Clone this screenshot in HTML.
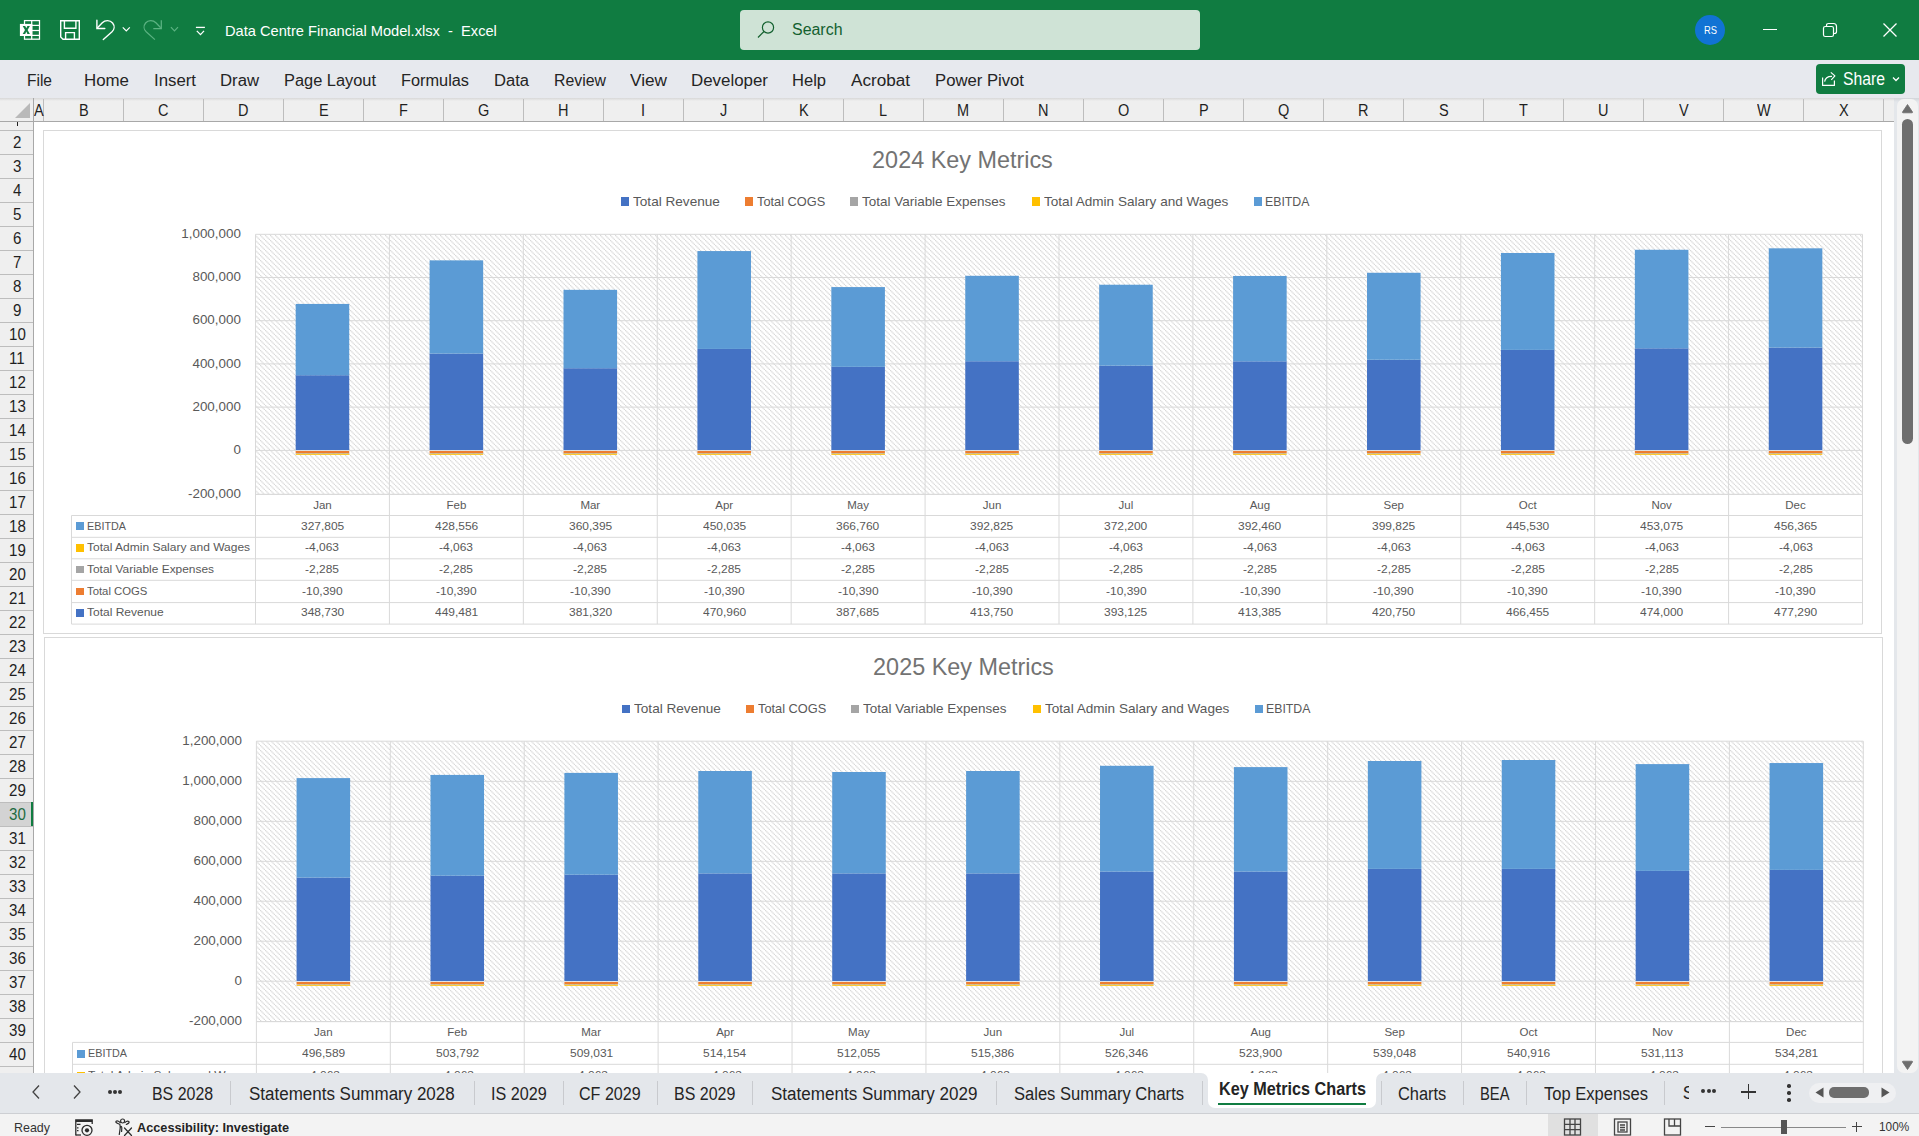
<!DOCTYPE html><html><head><meta charset="utf-8"><style>
*{margin:0;padding:0;box-sizing:border-box}
html,body{width:1919px;height:1136px;overflow:hidden;background:#fff;font-family:"Liberation Sans", sans-serif}
.a{position:absolute}
.t{position:absolute;white-space:nowrap;line-height:1}
</style></head><body>

<div class="a" style="left:0;top:0;width:1919px;height:60px;background:#107C41"></div>
<svg class="a" style="left:14px;top:14px" width="32" height="32" viewBox="14 14 32 32">
<g fill="none" stroke="#fff" stroke-width="1.25">
<rect x="24.5" y="20.6" width="15" height="18.6"/>
<line x1="31.7" y1="20.6" x2="31.7" y2="39.2"/>
<line x1="31.7" y1="25.4" x2="39.5" y2="25.4"/><line x1="31.7" y1="30.5" x2="39.5" y2="30.5"/><line x1="31.7" y1="35.4" x2="39.5" y2="35.4"/>
</g>
<rect x="19.9" y="23.9" width="12.4" height="12.1" fill="#fff"/>
<path d="M22.7 26 H25.2 L26.3 28.3 L27.4 26 H29.9 L27.6 29.9 L29.9 33.9 H27.4 L26.3 31.6 L25.2 33.9 H22.7 L25 29.9 Z" fill="#107C41"/>
</svg>
<svg class="a" style="left:58px;top:18px" width="24" height="24" viewBox="0 0 24 24">
<g fill="none" stroke="#fff" stroke-width="1.4">
<path d="M2.7 2.7 H21.3 V21.3 H5 L2.7 19 Z"/>
<path d="M6.4 2.7 V10.2 H17.9 V2.7"/>
<path d="M7.6 21.3 V14.6 H16.4 V21.3"/>
</g></svg>
<svg class="a" style="left:94px;top:18px" width="24" height="24" viewBox="0 0 24 24">
<g fill="none" stroke="#fff" stroke-width="1.4" stroke-linecap="round">
<path d="M2.9 2.3 V10.5 H10.8"/>
<path d="M3.5 9.8 L8.3 4.8 C11 2 16 1.8 18.6 5 C21 8 20.3 11.6 18 13.8 L9.3 21.6"/>
</g></svg>
<svg class="a" style="left:120px;top:25px" width="12" height="10" viewBox="0 0 12 10"><path d="M2.75 2.3 L6.3 5.9 L9.8 2.3" fill="none" stroke="#fff" stroke-width="1.2"/></svg>
<svg class="a" style="left:142px;top:18px" width="24" height="24" viewBox="0 0 24 24">
<g fill="none" stroke="#5BB282" stroke-width="1.25" stroke-linecap="butt">
<path d="M19.3 2.3 V10.6 H11.3"/>
<path d="M18.7 9.8 L13.9 4.8 C11.2 2 6.2 1.8 3.6 5 C1.2 8 1.9 11.6 4.2 13.8 L12.9 21.6"/>
</g></svg>
<svg class="a" style="left:168px;top:25px" width="12" height="10" viewBox="0 0 12 10"><path d="M2.9 2.2 L6.45 5.9 L10 2.2" fill="none" stroke="#5BB282" stroke-width="1.2"/></svg>
<svg class="a" style="left:193px;top:24px" width="14" height="14" viewBox="0 0 14 14"><g fill="none" stroke="#fff" stroke-width="1.3"><path d="M2.9 3.4 H11.9"/><path d="M3.8 6.9 L7.5 10.6 L11 6.9"/></g></svg>
<div class="t" style="left:225.00px;top:23.54px;font-size:14.6px;color:#fff;transform:scaleX(1.0036);transform-origin:0 0">Data Centre Financial Model.xlsx&nbsp; - &nbsp;Excel</div>
<div class="a" style="left:740px;top:10px;width:460px;height:40px;background:#CFE3D6;border-radius:4px"></div>
<svg class="a" style="left:754px;top:18px" width="24" height="24" viewBox="0 0 24 24"><g fill="none" stroke="#13602F" stroke-width="1.2"><circle cx="14" cy="9.5" r="5.6"/><path d="M10 13.5 L4 19.5"/></g></svg>
<div class="t" style="left:792.00px;top:22.26px;font-size:16px;color:#13602F;transform:scaleX(0.9961);transform-origin:0 0">Search</div>
<div class="a" style="left:1695px;top:15px;width:30px;height:30px;border-radius:50%;background:#1173D4"></div>
<div class="t" style="left:1703.50px;top:24.57px;font-size:11.5px;color:#fff;transform:scaleX(0.8137);transform-origin:0 0">RS</div>
<div class="a" style="left:1763px;top:29px;width:14px;height:1.3px;background:#fff"></div>
<svg class="a" style="left:1820px;top:20px" width="20" height="20" viewBox="0 0 20 20"><g fill="none" stroke="#fff" stroke-width="1.2"><path d="M6.5 6.5 V5.5 Q6.5 3.5 8.5 3.5 H13.5 Q16.5 3.5 16.5 6.5 V11.5 Q16.5 13.5 14.5 13.5 H13.5"/><rect x="3.5" y="6.5" width="10" height="10" rx="1.8" fill="#107C41"/></g></svg>
<svg class="a" style="left:1880px;top:20px" width="20" height="20" viewBox="0 0 20 20"><g stroke="#fff" stroke-width="1.3"><path d="M3.5 3.5 L16.5 16.5 M16.5 3.5 L3.5 16.5"/></g></svg>
<div class="a" style="left:0;top:60px;width:1919px;height:38px;background:#E7E9EE"></div>
<div class="t" style="left:27.00px;top:72.76px;font-size:16px;color:#242424;transform:scaleX(0.9696);transform-origin:0 0">File</div>
<div class="t" style="left:84.00px;top:72.76px;font-size:16px;color:#242424;transform:scaleX(1.0543);transform-origin:0 0">Home</div>
<div class="t" style="left:154.00px;top:72.76px;font-size:16px;color:#242424;transform:scaleX(1.0496);transform-origin:0 0">Insert</div>
<div class="t" style="left:220.00px;top:72.76px;font-size:16px;color:#242424;transform:scaleX(1.0445);transform-origin:0 0">Draw</div>
<div class="t" style="left:284.00px;top:72.76px;font-size:16px;color:#242424;transform:scaleX(1.0239);transform-origin:0 0">Page Layout</div>
<div class="t" style="left:401.00px;top:72.76px;font-size:16px;color:#242424;transform:scaleX(1.0198);transform-origin:0 0">Formulas</div>
<div class="t" style="left:494.00px;top:72.76px;font-size:16px;color:#242424;transform:scaleX(1.0356);transform-origin:0 0">Data</div>
<div class="t" style="left:554.00px;top:72.76px;font-size:16px;color:#242424;transform:scaleX(0.9912);transform-origin:0 0">Review</div>
<div class="t" style="left:630.00px;top:72.76px;font-size:16px;color:#242424;transform:scaleX(1.0758);transform-origin:0 0">View</div>
<div class="t" style="left:691.00px;top:72.76px;font-size:16px;color:#242424;transform:scaleX(1.0558);transform-origin:0 0">Developer</div>
<div class="t" style="left:792.00px;top:72.76px;font-size:16px;color:#242424;transform:scaleX(1.0332);transform-origin:0 0">Help</div>
<div class="t" style="left:851.00px;top:72.76px;font-size:16px;color:#242424;transform:scaleX(1.0700);transform-origin:0 0">Acrobat</div>
<div class="t" style="left:935.00px;top:72.76px;font-size:16px;color:#242424;transform:scaleX(1.0425);transform-origin:0 0">Power Pivot</div>
<div class="a" style="left:1816px;top:64px;width:89px;height:30px;background:#107C41;border-radius:4px"></div>
<svg class="a" style="left:1821px;top:70px" width="18" height="18" viewBox="0 0 18 18"><g fill="none" stroke="#fff" stroke-width="1.2" stroke-linejoin="round"><path d="M1.6 7.5 V15.4 H13.4 V10.5"/><path d="M3.6 11.6 C4.2 8 7 6.3 11 6.4"/><path d="M9.8 2.4 L13.9 5.9 L10.3 9.8"/></g></svg>
<div class="t" style="left:1843.00px;top:71.39px;font-size:17.5px;color:#fff;transform:scaleX(0.8994);transform-origin:0 0">Share</div>
<svg class="a" style="left:1891px;top:74px" width="10" height="10" viewBox="0 0 10 10"><path d="M2 3.5 L5 6.5 L8 3.5" fill="none" stroke="#fff" stroke-width="1.3"/></svg>
<div class="a" style="left:0;top:98px;width:1894px;height:24px;background:#EFEFEF"></div>
<div class="a" style="left:0;top:98px;width:1894px;height:3px;background:linear-gradient(#D8D8D8,#EFEFEF)"></div>
<div class="a" style="left:0;top:121px;width:1894px;height:1px;background:#A8A8A8"></div>
<svg class="a" style="left:14px;top:102px" width="18" height="18"><path d="M16 1 V16 H1 Z" fill="#B9B9B9"/></svg>
<div class="a" style="left:33px;top:98px;width:1px;height:1000px;background:#A8A8A8"></div>
<div class="a" style="left:43px;top:99px;width:1px;height:22px;background:#BDBDBD"></div>
<div class="t" style="left:33.66px;top:102.03px;font-size:16.5px;color:#1F1F1F;transform:scaleX(0.8800);transform-origin:0 0">A</div>
<div class="a" style="left:123px;top:99px;width:1px;height:22px;background:#BDBDBD"></div>
<div class="t" style="left:78.66px;top:102.03px;font-size:16.5px;color:#1F1F1F;transform:scaleX(0.8800);transform-origin:0 0">B</div>
<div class="a" style="left:203px;top:99px;width:1px;height:22px;background:#BDBDBD"></div>
<div class="t" style="left:158.26px;top:102.03px;font-size:16.5px;color:#1F1F1F;transform:scaleX(0.8800);transform-origin:0 0">C</div>
<div class="a" style="left:283px;top:99px;width:1px;height:22px;background:#BDBDBD"></div>
<div class="t" style="left:238.26px;top:102.03px;font-size:16.5px;color:#1F1F1F;transform:scaleX(0.8800);transform-origin:0 0">D</div>
<div class="a" style="left:363px;top:99px;width:1px;height:22px;background:#BDBDBD"></div>
<div class="t" style="left:318.66px;top:102.03px;font-size:16.5px;color:#1F1F1F;transform:scaleX(0.8800);transform-origin:0 0">E</div>
<div class="a" style="left:443px;top:99px;width:1px;height:22px;background:#BDBDBD"></div>
<div class="t" style="left:399.07px;top:102.03px;font-size:16.5px;color:#1F1F1F;transform:scaleX(0.8800);transform-origin:0 0">F</div>
<div class="a" style="left:523px;top:99px;width:1px;height:22px;background:#BDBDBD"></div>
<div class="t" style="left:477.85px;top:102.03px;font-size:16.5px;color:#1F1F1F;transform:scaleX(0.8800);transform-origin:0 0">G</div>
<div class="a" style="left:603px;top:99px;width:1px;height:22px;background:#BDBDBD"></div>
<div class="t" style="left:558.26px;top:102.03px;font-size:16.5px;color:#1F1F1F;transform:scaleX(0.8800);transform-origin:0 0">H</div>
<div class="a" style="left:683px;top:99px;width:1px;height:22px;background:#BDBDBD"></div>
<div class="t" style="left:641.48px;top:102.03px;font-size:16.5px;color:#1F1F1F;transform:scaleX(0.8800);transform-origin:0 0">I</div>
<div class="a" style="left:763px;top:99px;width:1px;height:22px;background:#BDBDBD"></div>
<div class="t" style="left:719.87px;top:102.03px;font-size:16.5px;color:#1F1F1F;transform:scaleX(0.8800);transform-origin:0 0">J</div>
<div class="a" style="left:843px;top:99px;width:1px;height:22px;background:#BDBDBD"></div>
<div class="t" style="left:798.66px;top:102.03px;font-size:16.5px;color:#1F1F1F;transform:scaleX(0.8800);transform-origin:0 0">K</div>
<div class="a" style="left:923px;top:99px;width:1px;height:22px;background:#BDBDBD"></div>
<div class="t" style="left:879.46px;top:102.03px;font-size:16.5px;color:#1F1F1F;transform:scaleX(0.8800);transform-origin:0 0">L</div>
<div class="a" style="left:1003px;top:99px;width:1px;height:22px;background:#BDBDBD"></div>
<div class="t" style="left:957.45px;top:102.03px;font-size:16.5px;color:#1F1F1F;transform:scaleX(0.8800);transform-origin:0 0">M</div>
<div class="a" style="left:1083px;top:99px;width:1px;height:22px;background:#BDBDBD"></div>
<div class="t" style="left:1038.26px;top:102.03px;font-size:16.5px;color:#1F1F1F;transform:scaleX(0.8800);transform-origin:0 0">N</div>
<div class="a" style="left:1163px;top:99px;width:1px;height:22px;background:#BDBDBD"></div>
<div class="t" style="left:1117.85px;top:102.03px;font-size:16.5px;color:#1F1F1F;transform:scaleX(0.8800);transform-origin:0 0">O</div>
<div class="a" style="left:1243px;top:99px;width:1px;height:22px;background:#BDBDBD"></div>
<div class="t" style="left:1198.66px;top:102.03px;font-size:16.5px;color:#1F1F1F;transform:scaleX(0.8800);transform-origin:0 0">P</div>
<div class="a" style="left:1323px;top:99px;width:1px;height:22px;background:#BDBDBD"></div>
<div class="t" style="left:1277.85px;top:102.03px;font-size:16.5px;color:#1F1F1F;transform:scaleX(0.8800);transform-origin:0 0">Q</div>
<div class="a" style="left:1403px;top:99px;width:1px;height:22px;background:#BDBDBD"></div>
<div class="t" style="left:1358.26px;top:102.03px;font-size:16.5px;color:#1F1F1F;transform:scaleX(0.8800);transform-origin:0 0">R</div>
<div class="a" style="left:1483px;top:99px;width:1px;height:22px;background:#BDBDBD"></div>
<div class="t" style="left:1438.66px;top:102.03px;font-size:16.5px;color:#1F1F1F;transform:scaleX(0.8800);transform-origin:0 0">S</div>
<div class="a" style="left:1563px;top:99px;width:1px;height:22px;background:#BDBDBD"></div>
<div class="t" style="left:1519.07px;top:102.03px;font-size:16.5px;color:#1F1F1F;transform:scaleX(0.8800);transform-origin:0 0">T</div>
<div class="a" style="left:1643px;top:99px;width:1px;height:22px;background:#BDBDBD"></div>
<div class="t" style="left:1598.26px;top:102.03px;font-size:16.5px;color:#1F1F1F;transform:scaleX(0.8800);transform-origin:0 0">U</div>
<div class="a" style="left:1723px;top:99px;width:1px;height:22px;background:#BDBDBD"></div>
<div class="t" style="left:1678.66px;top:102.03px;font-size:16.5px;color:#1F1F1F;transform:scaleX(0.8800);transform-origin:0 0">V</div>
<div class="a" style="left:1803px;top:99px;width:1px;height:22px;background:#BDBDBD"></div>
<div class="t" style="left:1756.65px;top:102.03px;font-size:16.5px;color:#1F1F1F;transform:scaleX(0.8800);transform-origin:0 0">W</div>
<div class="a" style="left:1883px;top:99px;width:1px;height:22px;background:#BDBDBD"></div>
<div class="t" style="left:1838.66px;top:102.03px;font-size:16.5px;color:#1F1F1F;transform:scaleX(0.8800);transform-origin:0 0">X</div>
<div class="a" style="left:0;top:122px;width:33px;height:951px;background:#EFEFEF"></div>
<div class="a" style="left:0;top:130px;width:33px;height:1px;background:#BDBDBD"></div>
<div class="a" style="left:16.5px;top:122px;width:1.5px;height:3.5px;background:#1F1F1F"></div>
<div class="a" style="left:0;top:154px;width:33px;height:1px;background:#BDBDBD"></div>
<div class="t" style="left:12.80px;top:135.18px;font-size:16.8px;color:#1F1F1F;transform:scaleX(0.9000);transform-origin:0 0">2</div>
<div class="a" style="left:0;top:178px;width:33px;height:1px;background:#BDBDBD"></div>
<div class="t" style="left:12.80px;top:159.18px;font-size:16.8px;color:#1F1F1F;transform:scaleX(0.9000);transform-origin:0 0">3</div>
<div class="a" style="left:0;top:202px;width:33px;height:1px;background:#BDBDBD"></div>
<div class="t" style="left:12.80px;top:183.18px;font-size:16.8px;color:#1F1F1F;transform:scaleX(0.9000);transform-origin:0 0">4</div>
<div class="a" style="left:0;top:226px;width:33px;height:1px;background:#BDBDBD"></div>
<div class="t" style="left:12.80px;top:207.18px;font-size:16.8px;color:#1F1F1F;transform:scaleX(0.9000);transform-origin:0 0">5</div>
<div class="a" style="left:0;top:250px;width:33px;height:1px;background:#BDBDBD"></div>
<div class="t" style="left:12.80px;top:231.18px;font-size:16.8px;color:#1F1F1F;transform:scaleX(0.9000);transform-origin:0 0">6</div>
<div class="a" style="left:0;top:274px;width:33px;height:1px;background:#BDBDBD"></div>
<div class="t" style="left:12.80px;top:255.18px;font-size:16.8px;color:#1F1F1F;transform:scaleX(0.9000);transform-origin:0 0">7</div>
<div class="a" style="left:0;top:298px;width:33px;height:1px;background:#BDBDBD"></div>
<div class="t" style="left:12.80px;top:279.18px;font-size:16.8px;color:#1F1F1F;transform:scaleX(0.9000);transform-origin:0 0">8</div>
<div class="a" style="left:0;top:322px;width:33px;height:1px;background:#BDBDBD"></div>
<div class="t" style="left:12.80px;top:303.18px;font-size:16.8px;color:#1F1F1F;transform:scaleX(0.9000);transform-origin:0 0">9</div>
<div class="a" style="left:0;top:346px;width:33px;height:1px;background:#BDBDBD"></div>
<div class="t" style="left:8.59px;top:327.18px;font-size:16.8px;color:#1F1F1F;transform:scaleX(0.9000);transform-origin:0 0">10</div>
<div class="a" style="left:0;top:370px;width:33px;height:1px;background:#BDBDBD"></div>
<div class="t" style="left:9.15px;top:351.18px;font-size:16.8px;color:#1F1F1F;transform:scaleX(0.9000);transform-origin:0 0">11</div>
<div class="a" style="left:0;top:394px;width:33px;height:1px;background:#BDBDBD"></div>
<div class="t" style="left:8.59px;top:375.18px;font-size:16.8px;color:#1F1F1F;transform:scaleX(0.9000);transform-origin:0 0">12</div>
<div class="a" style="left:0;top:418px;width:33px;height:1px;background:#BDBDBD"></div>
<div class="t" style="left:8.59px;top:399.18px;font-size:16.8px;color:#1F1F1F;transform:scaleX(0.9000);transform-origin:0 0">13</div>
<div class="a" style="left:0;top:442px;width:33px;height:1px;background:#BDBDBD"></div>
<div class="t" style="left:8.59px;top:423.18px;font-size:16.8px;color:#1F1F1F;transform:scaleX(0.9000);transform-origin:0 0">14</div>
<div class="a" style="left:0;top:466px;width:33px;height:1px;background:#BDBDBD"></div>
<div class="t" style="left:8.59px;top:447.18px;font-size:16.8px;color:#1F1F1F;transform:scaleX(0.9000);transform-origin:0 0">15</div>
<div class="a" style="left:0;top:490px;width:33px;height:1px;background:#BDBDBD"></div>
<div class="t" style="left:8.59px;top:471.18px;font-size:16.8px;color:#1F1F1F;transform:scaleX(0.9000);transform-origin:0 0">16</div>
<div class="a" style="left:0;top:514px;width:33px;height:1px;background:#BDBDBD"></div>
<div class="t" style="left:8.59px;top:495.18px;font-size:16.8px;color:#1F1F1F;transform:scaleX(0.9000);transform-origin:0 0">17</div>
<div class="a" style="left:0;top:538px;width:33px;height:1px;background:#BDBDBD"></div>
<div class="t" style="left:8.59px;top:519.18px;font-size:16.8px;color:#1F1F1F;transform:scaleX(0.9000);transform-origin:0 0">18</div>
<div class="a" style="left:0;top:562px;width:33px;height:1px;background:#BDBDBD"></div>
<div class="t" style="left:8.59px;top:543.18px;font-size:16.8px;color:#1F1F1F;transform:scaleX(0.9000);transform-origin:0 0">19</div>
<div class="a" style="left:0;top:586px;width:33px;height:1px;background:#BDBDBD"></div>
<div class="t" style="left:8.59px;top:567.18px;font-size:16.8px;color:#1F1F1F;transform:scaleX(0.9000);transform-origin:0 0">20</div>
<div class="a" style="left:0;top:610px;width:33px;height:1px;background:#BDBDBD"></div>
<div class="t" style="left:8.59px;top:591.18px;font-size:16.8px;color:#1F1F1F;transform:scaleX(0.9000);transform-origin:0 0">21</div>
<div class="a" style="left:0;top:634px;width:33px;height:1px;background:#BDBDBD"></div>
<div class="t" style="left:8.59px;top:615.18px;font-size:16.8px;color:#1F1F1F;transform:scaleX(0.9000);transform-origin:0 0">22</div>
<div class="a" style="left:0;top:658px;width:33px;height:1px;background:#BDBDBD"></div>
<div class="t" style="left:8.59px;top:639.18px;font-size:16.8px;color:#1F1F1F;transform:scaleX(0.9000);transform-origin:0 0">23</div>
<div class="a" style="left:0;top:682px;width:33px;height:1px;background:#BDBDBD"></div>
<div class="t" style="left:8.59px;top:663.18px;font-size:16.8px;color:#1F1F1F;transform:scaleX(0.9000);transform-origin:0 0">24</div>
<div class="a" style="left:0;top:706px;width:33px;height:1px;background:#BDBDBD"></div>
<div class="t" style="left:8.59px;top:687.18px;font-size:16.8px;color:#1F1F1F;transform:scaleX(0.9000);transform-origin:0 0">25</div>
<div class="a" style="left:0;top:730px;width:33px;height:1px;background:#BDBDBD"></div>
<div class="t" style="left:8.59px;top:711.18px;font-size:16.8px;color:#1F1F1F;transform:scaleX(0.9000);transform-origin:0 0">26</div>
<div class="a" style="left:0;top:754px;width:33px;height:1px;background:#BDBDBD"></div>
<div class="t" style="left:8.59px;top:735.18px;font-size:16.8px;color:#1F1F1F;transform:scaleX(0.9000);transform-origin:0 0">27</div>
<div class="a" style="left:0;top:778px;width:33px;height:1px;background:#BDBDBD"></div>
<div class="t" style="left:8.59px;top:759.18px;font-size:16.8px;color:#1F1F1F;transform:scaleX(0.9000);transform-origin:0 0">28</div>
<div class="a" style="left:0;top:802px;width:33px;height:1px;background:#BDBDBD"></div>
<div class="t" style="left:8.59px;top:783.18px;font-size:16.8px;color:#1F1F1F;transform:scaleX(0.9000);transform-origin:0 0">29</div>
<div class="a" style="left:0;top:826px;width:33px;height:1px;background:#BDBDBD"></div>
<div class="a" style="left:0;top:803px;width:33px;height:23px;background:#D3D3D3"></div>
<div class="a" style="left:31px;top:802px;width:2px;height:24px;background:#107C41"></div>
<div class="t" style="left:8.59px;top:807.18px;font-size:16.8px;color:#1E6B41;transform:scaleX(0.9000);transform-origin:0 0">30</div>
<div class="a" style="left:0;top:850px;width:33px;height:1px;background:#BDBDBD"></div>
<div class="t" style="left:8.59px;top:831.18px;font-size:16.8px;color:#1F1F1F;transform:scaleX(0.9000);transform-origin:0 0">31</div>
<div class="a" style="left:0;top:874px;width:33px;height:1px;background:#BDBDBD"></div>
<div class="t" style="left:8.59px;top:855.18px;font-size:16.8px;color:#1F1F1F;transform:scaleX(0.9000);transform-origin:0 0">32</div>
<div class="a" style="left:0;top:898px;width:33px;height:1px;background:#BDBDBD"></div>
<div class="t" style="left:8.59px;top:879.18px;font-size:16.8px;color:#1F1F1F;transform:scaleX(0.9000);transform-origin:0 0">33</div>
<div class="a" style="left:0;top:922px;width:33px;height:1px;background:#BDBDBD"></div>
<div class="t" style="left:8.59px;top:903.18px;font-size:16.8px;color:#1F1F1F;transform:scaleX(0.9000);transform-origin:0 0">34</div>
<div class="a" style="left:0;top:946px;width:33px;height:1px;background:#BDBDBD"></div>
<div class="t" style="left:8.59px;top:927.18px;font-size:16.8px;color:#1F1F1F;transform:scaleX(0.9000);transform-origin:0 0">35</div>
<div class="a" style="left:0;top:970px;width:33px;height:1px;background:#BDBDBD"></div>
<div class="t" style="left:8.59px;top:951.18px;font-size:16.8px;color:#1F1F1F;transform:scaleX(0.9000);transform-origin:0 0">36</div>
<div class="a" style="left:0;top:994px;width:33px;height:1px;background:#BDBDBD"></div>
<div class="t" style="left:8.59px;top:975.18px;font-size:16.8px;color:#1F1F1F;transform:scaleX(0.9000);transform-origin:0 0">37</div>
<div class="a" style="left:0;top:1018px;width:33px;height:1px;background:#BDBDBD"></div>
<div class="t" style="left:8.59px;top:999.18px;font-size:16.8px;color:#1F1F1F;transform:scaleX(0.9000);transform-origin:0 0">38</div>
<div class="a" style="left:0;top:1042px;width:33px;height:1px;background:#BDBDBD"></div>
<div class="t" style="left:8.59px;top:1023.18px;font-size:16.8px;color:#1F1F1F;transform:scaleX(0.9000);transform-origin:0 0">39</div>
<div class="a" style="left:0;top:1066px;width:33px;height:1px;background:#BDBDBD"></div>
<div class="t" style="left:8.59px;top:1047.18px;font-size:16.8px;color:#1F1F1F;transform:scaleX(0.9000);transform-origin:0 0">40</div>
<div class="a" style="left:0;top:1090px;width:33px;height:1px;background:#BDBDBD"></div>
<div class="a" style="left:34px;top:121px;width:1860px;height:952px;overflow:hidden">
<svg width="1860" height="952" style="position:absolute;left:0;top:0"><defs><pattern id="hp" patternUnits="userSpaceOnUse" x="0" y="0" width="5" height="5"><rect x="0" y="0" width="1" height="1" fill="rgb(217,217,217)"/><rect x="1" y="0" width="1" height="1" fill="rgb(246,246,246)"/><rect x="0" y="1" width="1" height="1" fill="rgb(246,246,246)"/><rect x="1" y="1" width="1" height="1" fill="rgb(231,231,231)"/><rect x="2" y="1" width="1" height="1" fill="rgb(241,241,241)"/><rect x="1" y="2" width="1" height="1" fill="rgb(241,241,241)"/><rect x="2" y="2" width="1" height="1" fill="rgb(236,236,236)"/><rect x="3" y="2" width="1" height="1" fill="rgb(241,241,241)"/><rect x="2" y="3" width="1" height="1" fill="rgb(241,241,241)"/><rect x="3" y="3" width="1" height="1" fill="rgb(231,231,231)"/><rect x="4" y="3" width="1" height="1" fill="rgb(246,246,246)"/><rect x="3" y="4" width="1" height="1" fill="rgb(246,246,246)"/><rect x="4" y="4" width="1" height="1" fill="rgb(217,217,217)"/></pattern></defs>
<g transform="translate(-34,-121)">
<rect x="43.5" y="130.5" width="1838.0" height="503.0" fill="#fff" stroke="#D9D9D9" stroke-width="1"/>
<rect x="255.5" y="234.3" width="1607.0" height="260.09999999999997" fill="url(#hp)"/>
<line x1="255.5" y1="234.3" x2="1862.5" y2="234.3" stroke="#D9D9D9" stroke-width="1"/>
<line x1="255.5" y1="277.5" x2="1862.5" y2="277.5" stroke="#D9D9D9" stroke-width="1"/>
<line x1="255.5" y1="320.7" x2="1862.5" y2="320.7" stroke="#D9D9D9" stroke-width="1"/>
<line x1="255.5" y1="363.9" x2="1862.5" y2="363.9" stroke="#D9D9D9" stroke-width="1"/>
<line x1="255.5" y1="407.1" x2="1862.5" y2="407.1" stroke="#D9D9D9" stroke-width="1"/>
<line x1="255.5" y1="450.4" x2="1862.5" y2="450.4" stroke="#D9D9D9" stroke-width="1"/>
<line x1="255.5" y1="494.4" x2="1862.5" y2="494.4" stroke="#D9D9D9" stroke-width="1"/>
<line x1="255.50" y1="234.3" x2="255.50" y2="624.1" stroke="#D9D9D9" stroke-width="1"/>
<line x1="389.42" y1="234.3" x2="389.42" y2="624.1" stroke="#D9D9D9" stroke-width="1"/>
<line x1="523.33" y1="234.3" x2="523.33" y2="624.1" stroke="#D9D9D9" stroke-width="1"/>
<line x1="657.25" y1="234.3" x2="657.25" y2="624.1" stroke="#D9D9D9" stroke-width="1"/>
<line x1="791.17" y1="234.3" x2="791.17" y2="624.1" stroke="#D9D9D9" stroke-width="1"/>
<line x1="925.08" y1="234.3" x2="925.08" y2="624.1" stroke="#D9D9D9" stroke-width="1"/>
<line x1="1059.00" y1="234.3" x2="1059.00" y2="624.1" stroke="#D9D9D9" stroke-width="1"/>
<line x1="1192.92" y1="234.3" x2="1192.92" y2="624.1" stroke="#D9D9D9" stroke-width="1"/>
<line x1="1326.83" y1="234.3" x2="1326.83" y2="624.1" stroke="#D9D9D9" stroke-width="1"/>
<line x1="1460.75" y1="234.3" x2="1460.75" y2="624.1" stroke="#D9D9D9" stroke-width="1"/>
<line x1="1594.67" y1="234.3" x2="1594.67" y2="624.1" stroke="#D9D9D9" stroke-width="1"/>
<line x1="1728.58" y1="234.3" x2="1728.58" y2="624.1" stroke="#D9D9D9" stroke-width="1"/>
<line x1="1862.50" y1="234.3" x2="1862.50" y2="624.1" stroke="#D9D9D9" stroke-width="1"/>
<line x1="71.5" y1="515.5" x2="1862.5" y2="515.5" stroke="#D9D9D9" stroke-width="1"/>
<line x1="71.5" y1="537.3" x2="1862.5" y2="537.3" stroke="#D9D9D9" stroke-width="1"/>
<line x1="71.5" y1="558.8" x2="1862.5" y2="558.8" stroke="#D9D9D9" stroke-width="1"/>
<line x1="71.5" y1="580.3" x2="1862.5" y2="580.3" stroke="#D9D9D9" stroke-width="1"/>
<line x1="71.5" y1="602.6" x2="1862.5" y2="602.6" stroke="#D9D9D9" stroke-width="1"/>
<line x1="71.5" y1="624.1" x2="1862.5" y2="624.1" stroke="#D9D9D9" stroke-width="1"/>
<line x1="71.5" y1="515.5" x2="71.5" y2="624.1" stroke="#D9D9D9" stroke-width="1"/>
<line x1="255.5" y1="494.4" x2="1862.5" y2="494.4" stroke="#D9D9D9" stroke-width="1"/>
<rect x="295.67" y="375.22" width="53.57" height="74.78" fill="#4472C4"/>
<rect x="295.67" y="303.93" width="53.57" height="71.30" fill="#5B9BD5"/>
<rect x="295.67" y="451" width="53.57" height="2.2" fill="#ED7D31"/>
<rect x="295.67" y="453.2" width="53.57" height="0.6" fill="#A5A5A5"/>
<rect x="295.67" y="453.8" width="53.57" height="1" fill="#FFC000"/>
<rect x="429.59" y="353.56" width="53.57" height="96.44" fill="#4472C4"/>
<rect x="429.59" y="260.35" width="53.57" height="93.21" fill="#5B9BD5"/>
<rect x="429.59" y="451" width="53.57" height="2.2" fill="#ED7D31"/>
<rect x="429.59" y="453.2" width="53.57" height="0.6" fill="#A5A5A5"/>
<rect x="429.59" y="453.8" width="53.57" height="1" fill="#FFC000"/>
<rect x="563.51" y="368.22" width="53.57" height="81.78" fill="#4472C4"/>
<rect x="563.51" y="289.83" width="53.57" height="78.39" fill="#5B9BD5"/>
<rect x="563.51" y="451" width="53.57" height="2.2" fill="#ED7D31"/>
<rect x="563.51" y="453.2" width="53.57" height="0.6" fill="#A5A5A5"/>
<rect x="563.51" y="453.8" width="53.57" height="1" fill="#FFC000"/>
<rect x="697.42" y="348.94" width="53.57" height="101.06" fill="#4472C4"/>
<rect x="697.42" y="251.06" width="53.57" height="97.88" fill="#5B9BD5"/>
<rect x="697.42" y="451" width="53.57" height="2.2" fill="#ED7D31"/>
<rect x="697.42" y="453.2" width="53.57" height="0.6" fill="#A5A5A5"/>
<rect x="697.42" y="453.8" width="53.57" height="1" fill="#FFC000"/>
<rect x="831.34" y="366.85" width="53.57" height="83.15" fill="#4472C4"/>
<rect x="831.34" y="287.08" width="53.57" height="79.77" fill="#5B9BD5"/>
<rect x="831.34" y="451" width="53.57" height="2.2" fill="#ED7D31"/>
<rect x="831.34" y="453.2" width="53.57" height="0.6" fill="#A5A5A5"/>
<rect x="831.34" y="453.8" width="53.57" height="1" fill="#FFC000"/>
<rect x="965.26" y="361.24" width="53.57" height="88.76" fill="#4472C4"/>
<rect x="965.26" y="275.80" width="53.57" height="85.44" fill="#5B9BD5"/>
<rect x="965.26" y="451" width="53.57" height="2.2" fill="#ED7D31"/>
<rect x="965.26" y="453.2" width="53.57" height="0.6" fill="#A5A5A5"/>
<rect x="965.26" y="453.8" width="53.57" height="1" fill="#FFC000"/>
<rect x="1099.17" y="365.68" width="53.57" height="84.32" fill="#4472C4"/>
<rect x="1099.17" y="284.72" width="53.57" height="80.95" fill="#5B9BD5"/>
<rect x="1099.17" y="451" width="53.57" height="2.2" fill="#ED7D31"/>
<rect x="1099.17" y="453.2" width="53.57" height="0.6" fill="#A5A5A5"/>
<rect x="1099.17" y="453.8" width="53.57" height="1" fill="#FFC000"/>
<rect x="1233.09" y="361.32" width="53.57" height="88.68" fill="#4472C4"/>
<rect x="1233.09" y="275.96" width="53.57" height="85.36" fill="#5B9BD5"/>
<rect x="1233.09" y="451" width="53.57" height="2.2" fill="#ED7D31"/>
<rect x="1233.09" y="453.2" width="53.57" height="0.6" fill="#A5A5A5"/>
<rect x="1233.09" y="453.8" width="53.57" height="1" fill="#FFC000"/>
<rect x="1367.01" y="359.74" width="53.57" height="90.26" fill="#4472C4"/>
<rect x="1367.01" y="272.78" width="53.57" height="86.96" fill="#5B9BD5"/>
<rect x="1367.01" y="451" width="53.57" height="2.2" fill="#ED7D31"/>
<rect x="1367.01" y="453.2" width="53.57" height="0.6" fill="#A5A5A5"/>
<rect x="1367.01" y="453.8" width="53.57" height="1" fill="#FFC000"/>
<rect x="1500.92" y="349.91" width="53.57" height="100.09" fill="#4472C4"/>
<rect x="1500.92" y="253.01" width="53.57" height="96.90" fill="#5B9BD5"/>
<rect x="1500.92" y="451" width="53.57" height="2.2" fill="#ED7D31"/>
<rect x="1500.92" y="453.2" width="53.57" height="0.6" fill="#A5A5A5"/>
<rect x="1500.92" y="453.8" width="53.57" height="1" fill="#FFC000"/>
<rect x="1634.84" y="348.29" width="53.57" height="101.71" fill="#4472C4"/>
<rect x="1634.84" y="249.75" width="53.57" height="98.54" fill="#5B9BD5"/>
<rect x="1634.84" y="451" width="53.57" height="2.2" fill="#ED7D31"/>
<rect x="1634.84" y="453.2" width="53.57" height="0.6" fill="#A5A5A5"/>
<rect x="1634.84" y="453.8" width="53.57" height="1" fill="#FFC000"/>
<rect x="1768.76" y="347.58" width="53.57" height="102.42" fill="#4472C4"/>
<rect x="1768.76" y="248.32" width="53.57" height="99.26" fill="#5B9BD5"/>
<rect x="1768.76" y="451" width="53.57" height="2.2" fill="#ED7D31"/>
<rect x="1768.76" y="453.2" width="53.57" height="0.6" fill="#A5A5A5"/>
<rect x="1768.76" y="453.8" width="53.57" height="1" fill="#FFC000"/>
<rect x="44.5" y="637.5" width="1838.0" height="562.5" fill="#fff" stroke="#D9D9D9" stroke-width="1"/>
<rect x="256.4" y="741.2" width="1606.9" height="280.4" fill="url(#hp)"/>
<line x1="256.4" y1="741.2" x2="1863.3" y2="741.2" stroke="#D9D9D9" stroke-width="1"/>
<line x1="256.4" y1="781.3" x2="1863.3" y2="781.3" stroke="#D9D9D9" stroke-width="1"/>
<line x1="256.4" y1="821.3" x2="1863.3" y2="821.3" stroke="#D9D9D9" stroke-width="1"/>
<line x1="256.4" y1="861.3" x2="1863.3" y2="861.3" stroke="#D9D9D9" stroke-width="1"/>
<line x1="256.4" y1="901.2" x2="1863.3" y2="901.2" stroke="#D9D9D9" stroke-width="1"/>
<line x1="256.4" y1="941.2" x2="1863.3" y2="941.2" stroke="#D9D9D9" stroke-width="1"/>
<line x1="256.4" y1="981.2" x2="1863.3" y2="981.2" stroke="#D9D9D9" stroke-width="1"/>
<line x1="256.4" y1="1021.6" x2="1863.3" y2="1021.6" stroke="#D9D9D9" stroke-width="1"/>
<line x1="256.40" y1="741.2" x2="256.40" y2="1152" stroke="#D9D9D9" stroke-width="1"/>
<line x1="390.31" y1="741.2" x2="390.31" y2="1152" stroke="#D9D9D9" stroke-width="1"/>
<line x1="524.22" y1="741.2" x2="524.22" y2="1152" stroke="#D9D9D9" stroke-width="1"/>
<line x1="658.12" y1="741.2" x2="658.12" y2="1152" stroke="#D9D9D9" stroke-width="1"/>
<line x1="792.03" y1="741.2" x2="792.03" y2="1152" stroke="#D9D9D9" stroke-width="1"/>
<line x1="925.94" y1="741.2" x2="925.94" y2="1152" stroke="#D9D9D9" stroke-width="1"/>
<line x1="1059.85" y1="741.2" x2="1059.85" y2="1152" stroke="#D9D9D9" stroke-width="1"/>
<line x1="1193.76" y1="741.2" x2="1193.76" y2="1152" stroke="#D9D9D9" stroke-width="1"/>
<line x1="1327.67" y1="741.2" x2="1327.67" y2="1152" stroke="#D9D9D9" stroke-width="1"/>
<line x1="1461.57" y1="741.2" x2="1461.57" y2="1152" stroke="#D9D9D9" stroke-width="1"/>
<line x1="1595.48" y1="741.2" x2="1595.48" y2="1152" stroke="#D9D9D9" stroke-width="1"/>
<line x1="1729.39" y1="741.2" x2="1729.39" y2="1152" stroke="#D9D9D9" stroke-width="1"/>
<line x1="1863.30" y1="741.2" x2="1863.30" y2="1152" stroke="#D9D9D9" stroke-width="1"/>
<line x1="72.5" y1="1042.4" x2="1863.3" y2="1042.4" stroke="#D9D9D9" stroke-width="1"/>
<line x1="72.5" y1="1064.3" x2="1863.3" y2="1064.3" stroke="#D9D9D9" stroke-width="1"/>
<line x1="72.5" y1="1086" x2="1863.3" y2="1086" stroke="#D9D9D9" stroke-width="1"/>
<line x1="72.5" y1="1108" x2="1863.3" y2="1108" stroke="#D9D9D9" stroke-width="1"/>
<line x1="72.5" y1="1130" x2="1863.3" y2="1130" stroke="#D9D9D9" stroke-width="1"/>
<line x1="72.5" y1="1152" x2="1863.3" y2="1152" stroke="#D9D9D9" stroke-width="1"/>
<line x1="72.5" y1="1042.4" x2="72.5" y2="1152" stroke="#D9D9D9" stroke-width="1"/>
<line x1="256.4" y1="1021.6" x2="1863.3" y2="1021.6" stroke="#D9D9D9" stroke-width="1"/>
<rect x="296.57" y="877.60" width="53.56" height="103.40" fill="#4472C4"/>
<rect x="296.57" y="778.10" width="53.56" height="99.50" fill="#5B9BD5"/>
<rect x="296.57" y="982" width="53.56" height="2.2" fill="#ED7D31"/>
<rect x="296.57" y="984.2" width="53.56" height="0.6" fill="#A5A5A5"/>
<rect x="296.57" y="984.8" width="53.56" height="1" fill="#FFC000"/>
<rect x="430.48" y="875.70" width="53.56" height="105.30" fill="#4472C4"/>
<rect x="430.48" y="774.90" width="53.56" height="100.80" fill="#5B9BD5"/>
<rect x="430.48" y="982" width="53.56" height="2.2" fill="#ED7D31"/>
<rect x="430.48" y="984.2" width="53.56" height="0.6" fill="#A5A5A5"/>
<rect x="430.48" y="984.8" width="53.56" height="1" fill="#FFC000"/>
<rect x="564.39" y="874.70" width="53.56" height="106.30" fill="#4472C4"/>
<rect x="564.39" y="772.90" width="53.56" height="101.80" fill="#5B9BD5"/>
<rect x="564.39" y="982" width="53.56" height="2.2" fill="#ED7D31"/>
<rect x="564.39" y="984.2" width="53.56" height="0.6" fill="#A5A5A5"/>
<rect x="564.39" y="984.8" width="53.56" height="1" fill="#FFC000"/>
<rect x="698.30" y="873.40" width="53.56" height="107.60" fill="#4472C4"/>
<rect x="698.30" y="771.00" width="53.56" height="102.40" fill="#5B9BD5"/>
<rect x="698.30" y="982" width="53.56" height="2.2" fill="#ED7D31"/>
<rect x="698.30" y="984.2" width="53.56" height="0.6" fill="#A5A5A5"/>
<rect x="698.30" y="984.8" width="53.56" height="1" fill="#FFC000"/>
<rect x="832.21" y="873.40" width="53.56" height="107.60" fill="#4472C4"/>
<rect x="832.21" y="772.00" width="53.56" height="101.40" fill="#5B9BD5"/>
<rect x="832.21" y="982" width="53.56" height="2.2" fill="#ED7D31"/>
<rect x="832.21" y="984.2" width="53.56" height="0.6" fill="#A5A5A5"/>
<rect x="832.21" y="984.8" width="53.56" height="1" fill="#FFC000"/>
<rect x="966.11" y="873.40" width="53.56" height="107.60" fill="#4472C4"/>
<rect x="966.11" y="771.00" width="53.56" height="102.40" fill="#5B9BD5"/>
<rect x="966.11" y="982" width="53.56" height="2.2" fill="#ED7D31"/>
<rect x="966.11" y="984.2" width="53.56" height="0.6" fill="#A5A5A5"/>
<rect x="966.11" y="984.8" width="53.56" height="1" fill="#FFC000"/>
<rect x="1100.02" y="871.50" width="53.56" height="109.50" fill="#4472C4"/>
<rect x="1100.02" y="765.80" width="53.56" height="105.70" fill="#5B9BD5"/>
<rect x="1100.02" y="982" width="53.56" height="2.2" fill="#ED7D31"/>
<rect x="1100.02" y="984.2" width="53.56" height="0.6" fill="#A5A5A5"/>
<rect x="1100.02" y="984.8" width="53.56" height="1" fill="#FFC000"/>
<rect x="1233.93" y="871.50" width="53.56" height="109.50" fill="#4472C4"/>
<rect x="1233.93" y="767.10" width="53.56" height="104.40" fill="#5B9BD5"/>
<rect x="1233.93" y="982" width="53.56" height="2.2" fill="#ED7D31"/>
<rect x="1233.93" y="984.2" width="53.56" height="0.6" fill="#A5A5A5"/>
<rect x="1233.93" y="984.8" width="53.56" height="1" fill="#FFC000"/>
<rect x="1367.84" y="868.90" width="53.56" height="112.10" fill="#4472C4"/>
<rect x="1367.84" y="761.00" width="53.56" height="107.90" fill="#5B9BD5"/>
<rect x="1367.84" y="982" width="53.56" height="2.2" fill="#ED7D31"/>
<rect x="1367.84" y="984.2" width="53.56" height="0.6" fill="#A5A5A5"/>
<rect x="1367.84" y="984.8" width="53.56" height="1" fill="#FFC000"/>
<rect x="1501.75" y="868.90" width="53.56" height="112.10" fill="#4472C4"/>
<rect x="1501.75" y="760.00" width="53.56" height="108.90" fill="#5B9BD5"/>
<rect x="1501.75" y="982" width="53.56" height="2.2" fill="#ED7D31"/>
<rect x="1501.75" y="984.2" width="53.56" height="0.6" fill="#A5A5A5"/>
<rect x="1501.75" y="984.8" width="53.56" height="1" fill="#FFC000"/>
<rect x="1635.66" y="870.90" width="53.56" height="110.10" fill="#4472C4"/>
<rect x="1635.66" y="764.10" width="53.56" height="106.80" fill="#5B9BD5"/>
<rect x="1635.66" y="982" width="53.56" height="2.2" fill="#ED7D31"/>
<rect x="1635.66" y="984.2" width="53.56" height="0.6" fill="#A5A5A5"/>
<rect x="1635.66" y="984.8" width="53.56" height="1" fill="#FFC000"/>
<rect x="1769.56" y="869.90" width="53.56" height="111.10" fill="#4472C4"/>
<rect x="1769.56" y="763.05" width="53.56" height="106.85" fill="#5B9BD5"/>
<rect x="1769.56" y="982" width="53.56" height="2.2" fill="#ED7D31"/>
<rect x="1769.56" y="984.2" width="53.56" height="0.6" fill="#A5A5A5"/>
<rect x="1769.56" y="984.8" width="53.56" height="1" fill="#FFC000"/>
</g></svg>
<div class="t" style="left:838.11px;top:27.79px;font-size:23.4px;color:#737373">2024 Key Metrics</div>
<div class="a" style="left:587px;top:76.20000000000002px;width:8px;height:8.5px;background:#4472C4"></div>
<div class="t" style="left:598.50px;top:73.90px;font-size:13px;color:#595959;transform:scaleX(1.0456);transform-origin:0 0">Total Revenue</div>
<div class="a" style="left:711.2px;top:76.20000000000002px;width:8px;height:8.5px;background:#ED7D31"></div>
<div class="t" style="left:722.80px;top:73.90px;font-size:13px;color:#595959;transform:scaleX(0.9848);transform-origin:0 0">Total COGS</div>
<div class="a" style="left:816.3px;top:76.20000000000002px;width:8px;height:8.5px;background:#A5A5A5"></div>
<div class="t" style="left:828.10px;top:73.90px;font-size:13px;color:#595959;transform:scaleX(1.0360);transform-origin:0 0">Total Variable Expenses</div>
<div class="a" style="left:997.5px;top:76.20000000000002px;width:8px;height:8.5px;background:#FFC000"></div>
<div class="t" style="left:1009.50px;top:73.90px;font-size:13px;color:#595959;transform:scaleX(1.0438);transform-origin:0 0">Total Admin Salary and Wages</div>
<div class="a" style="left:1219.6px;top:76.20000000000002px;width:8px;height:8.5px;background:#5B9BD5"></div>
<div class="t" style="left:1230.80px;top:73.90px;font-size:13px;color:#595959;transform:scaleX(0.9456);transform-origin:0 0">EBITDA</div>
<div class="t" style="left:147.29px;top:106.06px;font-size:13.4px;color:#595959">1,000,000</div>
<div class="t" style="left:158.46px;top:149.26px;font-size:13.4px;color:#595959">800,000</div>
<div class="t" style="left:158.46px;top:192.46px;font-size:13.4px;color:#595959">600,000</div>
<div class="t" style="left:158.46px;top:235.66px;font-size:13.4px;color:#595959">400,000</div>
<div class="t" style="left:158.46px;top:278.86px;font-size:13.4px;color:#595959">200,000</div>
<div class="t" style="left:199.45px;top:322.16px;font-size:13.4px;color:#595959">0</div>
<div class="t" style="left:154.00px;top:366.16px;font-size:13.4px;color:#595959">-200,000</div>
<div class="t" style="left:279.19px;top:378.62px;font-size:11.5px;color:#595959">Jan</div>
<div class="t" style="left:412.47px;top:378.62px;font-size:11.5px;color:#595959">Feb</div>
<div class="t" style="left:546.39px;top:378.62px;font-size:11.5px;color:#595959">Mar</div>
<div class="t" style="left:681.26px;top:378.62px;font-size:11.5px;color:#595959">Apr</div>
<div class="t" style="left:813.26px;top:378.62px;font-size:11.5px;color:#595959">May</div>
<div class="t" style="left:948.77px;top:378.62px;font-size:11.5px;color:#595959">Jun</div>
<div class="t" style="left:1084.61px;top:378.62px;font-size:11.5px;color:#595959">Jul</div>
<div class="t" style="left:1215.64px;top:378.62px;font-size:11.5px;color:#595959">Aug</div>
<div class="t" style="left:1349.56px;top:378.62px;font-size:11.5px;color:#595959">Sep</div>
<div class="t" style="left:1484.76px;top:378.62px;font-size:11.5px;color:#595959">Oct</div>
<div class="t" style="left:1617.40px;top:378.62px;font-size:11.5px;color:#595959">Nov</div>
<div class="t" style="left:1751.32px;top:378.62px;font-size:11.5px;color:#595959">Dec</div>
<div class="a" style="left:42px;top:401.4px;width:8px;height:7.5px;background:#5B9BD5"></div>
<div class="t" style="left:52.90px;top:399.52px;font-size:11.2px;color:#595959;transform:scaleX(0.9641);transform-origin:0 0">EBITDA</div>
<div class="t" style="left:266.80px;top:399.52px;font-size:11.2px;color:#595959;transform:scaleX(1.0700);transform-origin:0 0">327,805</div>
<div class="t" style="left:400.71px;top:399.52px;font-size:11.2px;color:#595959;transform:scaleX(1.0700);transform-origin:0 0">428,556</div>
<div class="t" style="left:534.63px;top:399.52px;font-size:11.2px;color:#595959;transform:scaleX(1.0700);transform-origin:0 0">360,395</div>
<div class="t" style="left:668.55px;top:399.52px;font-size:11.2px;color:#595959;transform:scaleX(1.0700);transform-origin:0 0">450,035</div>
<div class="t" style="left:802.46px;top:399.52px;font-size:11.2px;color:#595959;transform:scaleX(1.0700);transform-origin:0 0">366,760</div>
<div class="t" style="left:936.38px;top:399.52px;font-size:11.2px;color:#595959;transform:scaleX(1.0700);transform-origin:0 0">392,825</div>
<div class="t" style="left:1070.30px;top:399.52px;font-size:11.2px;color:#595959;transform:scaleX(1.0700);transform-origin:0 0">372,200</div>
<div class="t" style="left:1204.21px;top:399.52px;font-size:11.2px;color:#595959;transform:scaleX(1.0700);transform-origin:0 0">392,460</div>
<div class="t" style="left:1338.13px;top:399.52px;font-size:11.2px;color:#595959;transform:scaleX(1.0700);transform-origin:0 0">399,825</div>
<div class="t" style="left:1472.05px;top:399.52px;font-size:11.2px;color:#595959;transform:scaleX(1.0700);transform-origin:0 0">445,530</div>
<div class="t" style="left:1605.96px;top:399.52px;font-size:11.2px;color:#595959;transform:scaleX(1.0700);transform-origin:0 0">453,075</div>
<div class="t" style="left:1739.88px;top:399.52px;font-size:11.2px;color:#595959;transform:scaleX(1.0700);transform-origin:0 0">456,365</div>
<div class="a" style="left:42px;top:423.0px;width:8px;height:7.5px;background:#FFC000"></div>
<div class="t" style="left:52.90px;top:421.17px;font-size:11.2px;color:#595959;transform:scaleX(1.0736);transform-origin:0 0">Total Admin Salary and Wages</div>
<div class="t" style="left:271.47px;top:421.17px;font-size:11.2px;color:#595959;transform:scaleX(1.0700);transform-origin:0 0">-4,063</div>
<div class="t" style="left:405.38px;top:421.17px;font-size:11.2px;color:#595959;transform:scaleX(1.0700);transform-origin:0 0">-4,063</div>
<div class="t" style="left:539.30px;top:421.17px;font-size:11.2px;color:#595959;transform:scaleX(1.0700);transform-origin:0 0">-4,063</div>
<div class="t" style="left:673.22px;top:421.17px;font-size:11.2px;color:#595959;transform:scaleX(1.0700);transform-origin:0 0">-4,063</div>
<div class="t" style="left:807.13px;top:421.17px;font-size:11.2px;color:#595959;transform:scaleX(1.0700);transform-origin:0 0">-4,063</div>
<div class="t" style="left:941.05px;top:421.17px;font-size:11.2px;color:#595959;transform:scaleX(1.0700);transform-origin:0 0">-4,063</div>
<div class="t" style="left:1074.97px;top:421.17px;font-size:11.2px;color:#595959;transform:scaleX(1.0700);transform-origin:0 0">-4,063</div>
<div class="t" style="left:1208.88px;top:421.17px;font-size:11.2px;color:#595959;transform:scaleX(1.0700);transform-origin:0 0">-4,063</div>
<div class="t" style="left:1342.80px;top:421.17px;font-size:11.2px;color:#595959;transform:scaleX(1.0700);transform-origin:0 0">-4,063</div>
<div class="t" style="left:1476.72px;top:421.17px;font-size:11.2px;color:#595959;transform:scaleX(1.0700);transform-origin:0 0">-4,063</div>
<div class="t" style="left:1610.63px;top:421.17px;font-size:11.2px;color:#595959;transform:scaleX(1.0700);transform-origin:0 0">-4,063</div>
<div class="t" style="left:1744.55px;top:421.17px;font-size:11.2px;color:#595959;transform:scaleX(1.0700);transform-origin:0 0">-4,063</div>
<div class="a" style="left:42px;top:444.5px;width:8px;height:7.5px;background:#A5A5A5"></div>
<div class="t" style="left:52.90px;top:442.67px;font-size:11.2px;color:#595959;transform:scaleX(1.0659);transform-origin:0 0">Total Variable Expenses</div>
<div class="t" style="left:271.47px;top:442.67px;font-size:11.2px;color:#595959;transform:scaleX(1.0700);transform-origin:0 0">-2,285</div>
<div class="t" style="left:405.38px;top:442.67px;font-size:11.2px;color:#595959;transform:scaleX(1.0700);transform-origin:0 0">-2,285</div>
<div class="t" style="left:539.30px;top:442.67px;font-size:11.2px;color:#595959;transform:scaleX(1.0700);transform-origin:0 0">-2,285</div>
<div class="t" style="left:673.22px;top:442.67px;font-size:11.2px;color:#595959;transform:scaleX(1.0700);transform-origin:0 0">-2,285</div>
<div class="t" style="left:807.13px;top:442.67px;font-size:11.2px;color:#595959;transform:scaleX(1.0700);transform-origin:0 0">-2,285</div>
<div class="t" style="left:941.05px;top:442.67px;font-size:11.2px;color:#595959;transform:scaleX(1.0700);transform-origin:0 0">-2,285</div>
<div class="t" style="left:1074.97px;top:442.67px;font-size:11.2px;color:#595959;transform:scaleX(1.0700);transform-origin:0 0">-2,285</div>
<div class="t" style="left:1208.88px;top:442.67px;font-size:11.2px;color:#595959;transform:scaleX(1.0700);transform-origin:0 0">-2,285</div>
<div class="t" style="left:1342.80px;top:442.67px;font-size:11.2px;color:#595959;transform:scaleX(1.0700);transform-origin:0 0">-2,285</div>
<div class="t" style="left:1476.72px;top:442.67px;font-size:11.2px;color:#595959;transform:scaleX(1.0700);transform-origin:0 0">-2,285</div>
<div class="t" style="left:1610.63px;top:442.67px;font-size:11.2px;color:#595959;transform:scaleX(1.0700);transform-origin:0 0">-2,285</div>
<div class="t" style="left:1744.55px;top:442.67px;font-size:11.2px;color:#595959;transform:scaleX(1.0700);transform-origin:0 0">-2,285</div>
<div class="a" style="left:42px;top:466.5px;width:8px;height:7.5px;background:#ED7D31"></div>
<div class="t" style="left:52.90px;top:464.57px;font-size:11.2px;color:#595959;transform:scaleX(1.0125);transform-origin:0 0">Total COGS</div>
<div class="t" style="left:268.14px;top:464.57px;font-size:11.2px;color:#595959;transform:scaleX(1.0700);transform-origin:0 0">-10,390</div>
<div class="t" style="left:402.05px;top:464.57px;font-size:11.2px;color:#595959;transform:scaleX(1.0700);transform-origin:0 0">-10,390</div>
<div class="t" style="left:535.97px;top:464.57px;font-size:11.2px;color:#595959;transform:scaleX(1.0700);transform-origin:0 0">-10,390</div>
<div class="t" style="left:669.89px;top:464.57px;font-size:11.2px;color:#595959;transform:scaleX(1.0700);transform-origin:0 0">-10,390</div>
<div class="t" style="left:803.80px;top:464.57px;font-size:11.2px;color:#595959;transform:scaleX(1.0700);transform-origin:0 0">-10,390</div>
<div class="t" style="left:937.72px;top:464.57px;font-size:11.2px;color:#595959;transform:scaleX(1.0700);transform-origin:0 0">-10,390</div>
<div class="t" style="left:1071.64px;top:464.57px;font-size:11.2px;color:#595959;transform:scaleX(1.0700);transform-origin:0 0">-10,390</div>
<div class="t" style="left:1205.55px;top:464.57px;font-size:11.2px;color:#595959;transform:scaleX(1.0700);transform-origin:0 0">-10,390</div>
<div class="t" style="left:1339.47px;top:464.57px;font-size:11.2px;color:#595959;transform:scaleX(1.0700);transform-origin:0 0">-10,390</div>
<div class="t" style="left:1473.39px;top:464.57px;font-size:11.2px;color:#595959;transform:scaleX(1.0700);transform-origin:0 0">-10,390</div>
<div class="t" style="left:1607.30px;top:464.57px;font-size:11.2px;color:#595959;transform:scaleX(1.0700);transform-origin:0 0">-10,390</div>
<div class="t" style="left:1741.22px;top:464.57px;font-size:11.2px;color:#595959;transform:scaleX(1.0700);transform-origin:0 0">-10,390</div>
<div class="a" style="left:42px;top:488.4px;width:8px;height:7.5px;background:#4472C4"></div>
<div class="t" style="left:52.90px;top:486.47px;font-size:11.2px;color:#595959;transform:scaleX(1.0726);transform-origin:0 0">Total Revenue</div>
<div class="t" style="left:266.80px;top:486.47px;font-size:11.2px;color:#595959;transform:scaleX(1.0700);transform-origin:0 0">348,730</div>
<div class="t" style="left:400.71px;top:486.47px;font-size:11.2px;color:#595959;transform:scaleX(1.0700);transform-origin:0 0">449,481</div>
<div class="t" style="left:534.63px;top:486.47px;font-size:11.2px;color:#595959;transform:scaleX(1.0700);transform-origin:0 0">381,320</div>
<div class="t" style="left:668.55px;top:486.47px;font-size:11.2px;color:#595959;transform:scaleX(1.0700);transform-origin:0 0">470,960</div>
<div class="t" style="left:802.46px;top:486.47px;font-size:11.2px;color:#595959;transform:scaleX(1.0700);transform-origin:0 0">387,685</div>
<div class="t" style="left:936.38px;top:486.47px;font-size:11.2px;color:#595959;transform:scaleX(1.0700);transform-origin:0 0">413,750</div>
<div class="t" style="left:1070.30px;top:486.47px;font-size:11.2px;color:#595959;transform:scaleX(1.0700);transform-origin:0 0">393,125</div>
<div class="t" style="left:1204.21px;top:486.47px;font-size:11.2px;color:#595959;transform:scaleX(1.0700);transform-origin:0 0">413,385</div>
<div class="t" style="left:1338.13px;top:486.47px;font-size:11.2px;color:#595959;transform:scaleX(1.0700);transform-origin:0 0">420,750</div>
<div class="t" style="left:1472.05px;top:486.47px;font-size:11.2px;color:#595959;transform:scaleX(1.0700);transform-origin:0 0">466,455</div>
<div class="t" style="left:1605.96px;top:486.47px;font-size:11.2px;color:#595959;transform:scaleX(1.0700);transform-origin:0 0">474,000</div>
<div class="t" style="left:1739.88px;top:486.47px;font-size:11.2px;color:#595959;transform:scaleX(1.0700);transform-origin:0 0">477,290</div>
<div class="t" style="left:839.11px;top:535.09px;font-size:23.4px;color:#737373">2025 Key Metrics</div>
<div class="a" style="left:588px;top:583.5px;width:8px;height:8.5px;background:#4472C4"></div>
<div class="t" style="left:599.50px;top:581.20px;font-size:13px;color:#595959;transform:scaleX(1.0456);transform-origin:0 0">Total Revenue</div>
<div class="a" style="left:712.2px;top:583.5px;width:8px;height:8.5px;background:#ED7D31"></div>
<div class="t" style="left:723.80px;top:581.20px;font-size:13px;color:#595959;transform:scaleX(0.9848);transform-origin:0 0">Total COGS</div>
<div class="a" style="left:817.3px;top:583.5px;width:8px;height:8.5px;background:#A5A5A5"></div>
<div class="t" style="left:829.10px;top:581.20px;font-size:13px;color:#595959;transform:scaleX(1.0360);transform-origin:0 0">Total Variable Expenses</div>
<div class="a" style="left:998.5px;top:583.5px;width:8px;height:8.5px;background:#FFC000"></div>
<div class="t" style="left:1010.50px;top:581.20px;font-size:13px;color:#595959;transform:scaleX(1.0438);transform-origin:0 0">Total Admin Salary and Wages</div>
<div class="a" style="left:1220.6px;top:583.5px;width:8px;height:8.5px;background:#5B9BD5"></div>
<div class="t" style="left:1231.80px;top:581.20px;font-size:13px;color:#595959;transform:scaleX(0.9456);transform-origin:0 0">EBITDA</div>
<div class="t" style="left:148.29px;top:612.96px;font-size:13.4px;color:#595959">1,200,000</div>
<div class="t" style="left:148.29px;top:653.06px;font-size:13.4px;color:#595959">1,000,000</div>
<div class="t" style="left:159.46px;top:693.06px;font-size:13.4px;color:#595959">800,000</div>
<div class="t" style="left:159.46px;top:733.06px;font-size:13.4px;color:#595959">600,000</div>
<div class="t" style="left:159.46px;top:772.96px;font-size:13.4px;color:#595959">400,000</div>
<div class="t" style="left:159.46px;top:812.96px;font-size:13.4px;color:#595959">200,000</div>
<div class="t" style="left:200.45px;top:852.96px;font-size:13.4px;color:#595959">0</div>
<div class="t" style="left:155.00px;top:893.36px;font-size:13.4px;color:#595959">-200,000</div>
<div class="t" style="left:280.08px;top:905.67px;font-size:11.5px;color:#595959">Jan</div>
<div class="t" style="left:413.35px;top:905.67px;font-size:11.5px;color:#595959">Feb</div>
<div class="t" style="left:547.27px;top:905.67px;font-size:11.5px;color:#595959">Mar</div>
<div class="t" style="left:682.13px;top:905.67px;font-size:11.5px;color:#595959">Apr</div>
<div class="t" style="left:814.12px;top:905.67px;font-size:11.5px;color:#595959">May</div>
<div class="t" style="left:949.62px;top:905.67px;font-size:11.5px;color:#595959">Jun</div>
<div class="t" style="left:1085.45px;top:905.67px;font-size:11.5px;color:#595959">Jul</div>
<div class="t" style="left:1216.48px;top:905.67px;font-size:11.5px;color:#595959">Aug</div>
<div class="t" style="left:1350.39px;top:905.67px;font-size:11.5px;color:#595959">Sep</div>
<div class="t" style="left:1485.58px;top:905.67px;font-size:11.5px;color:#595959">Oct</div>
<div class="t" style="left:1618.21px;top:905.67px;font-size:11.5px;color:#595959">Nov</div>
<div class="t" style="left:1752.12px;top:905.67px;font-size:11.5px;color:#595959">Dec</div>
<div class="a" style="left:43px;top:929.1px;width:8px;height:7.5px;background:#5B9BD5"></div>
<div class="t" style="left:53.90px;top:927.27px;font-size:11.2px;color:#595959;transform:scaleX(0.9641);transform-origin:0 0">EBITDA</div>
<div class="t" style="left:267.69px;top:927.27px;font-size:11.2px;color:#595959;transform:scaleX(1.0700);transform-origin:0 0">496,589</div>
<div class="t" style="left:401.60px;top:927.27px;font-size:11.2px;color:#595959;transform:scaleX(1.0700);transform-origin:0 0">503,792</div>
<div class="t" style="left:535.51px;top:927.27px;font-size:11.2px;color:#595959;transform:scaleX(1.0700);transform-origin:0 0">509,031</div>
<div class="t" style="left:669.42px;top:927.27px;font-size:11.2px;color:#595959;transform:scaleX(1.0700);transform-origin:0 0">514,154</div>
<div class="t" style="left:803.33px;top:927.27px;font-size:11.2px;color:#595959;transform:scaleX(1.0700);transform-origin:0 0">512,055</div>
<div class="t" style="left:937.24px;top:927.27px;font-size:11.2px;color:#595959;transform:scaleX(1.0700);transform-origin:0 0">515,386</div>
<div class="t" style="left:1071.14px;top:927.27px;font-size:11.2px;color:#595959;transform:scaleX(1.0700);transform-origin:0 0">526,346</div>
<div class="t" style="left:1205.05px;top:927.27px;font-size:11.2px;color:#595959;transform:scaleX(1.0700);transform-origin:0 0">523,900</div>
<div class="t" style="left:1338.96px;top:927.27px;font-size:11.2px;color:#595959;transform:scaleX(1.0700);transform-origin:0 0">539,048</div>
<div class="t" style="left:1472.87px;top:927.27px;font-size:11.2px;color:#595959;transform:scaleX(1.0700);transform-origin:0 0">540,916</div>
<div class="t" style="left:1607.22px;top:927.27px;font-size:11.2px;color:#595959;transform:scaleX(1.0700);transform-origin:0 0">531,113</div>
<div class="t" style="left:1740.69px;top:927.27px;font-size:11.2px;color:#595959;transform:scaleX(1.0700);transform-origin:0 0">534,281</div>
<div class="a" style="left:43px;top:951.0px;width:8px;height:7.5px;background:#FFC000"></div>
<div class="t" style="left:53.90px;top:949.07px;font-size:11.2px;color:#595959;transform:scaleX(1.0736);transform-origin:0 0">Total Admin Salary and Wages</div>
<div class="t" style="left:272.36px;top:949.07px;font-size:11.2px;color:#595959;transform:scaleX(1.0700);transform-origin:0 0">-4,063</div>
<div class="t" style="left:406.27px;top:949.07px;font-size:11.2px;color:#595959;transform:scaleX(1.0700);transform-origin:0 0">-4,063</div>
<div class="t" style="left:540.18px;top:949.07px;font-size:11.2px;color:#595959;transform:scaleX(1.0700);transform-origin:0 0">-4,063</div>
<div class="t" style="left:674.09px;top:949.07px;font-size:11.2px;color:#595959;transform:scaleX(1.0700);transform-origin:0 0">-4,063</div>
<div class="t" style="left:808.00px;top:949.07px;font-size:11.2px;color:#595959;transform:scaleX(1.0700);transform-origin:0 0">-4,063</div>
<div class="t" style="left:941.91px;top:949.07px;font-size:11.2px;color:#595959;transform:scaleX(1.0700);transform-origin:0 0">-4,063</div>
<div class="t" style="left:1075.81px;top:949.07px;font-size:11.2px;color:#595959;transform:scaleX(1.0700);transform-origin:0 0">-4,063</div>
<div class="t" style="left:1209.72px;top:949.07px;font-size:11.2px;color:#595959;transform:scaleX(1.0700);transform-origin:0 0">-4,063</div>
<div class="t" style="left:1343.63px;top:949.07px;font-size:11.2px;color:#595959;transform:scaleX(1.0700);transform-origin:0 0">-4,063</div>
<div class="t" style="left:1477.54px;top:949.07px;font-size:11.2px;color:#595959;transform:scaleX(1.0700);transform-origin:0 0">-4,063</div>
<div class="t" style="left:1611.45px;top:949.07px;font-size:11.2px;color:#595959;transform:scaleX(1.0700);transform-origin:0 0">-4,063</div>
<div class="t" style="left:1745.36px;top:949.07px;font-size:11.2px;color:#595959;transform:scaleX(1.0700);transform-origin:0 0">-4,063</div>
<div class="a" style="left:43px;top:972.8px;width:8px;height:7.5px;background:#A5A5A5"></div>
<div class="t" style="left:53.90px;top:970.92px;font-size:11.2px;color:#595959;transform:scaleX(1.0659);transform-origin:0 0">Total Variable Expenses</div>
<div class="t" style="left:272.36px;top:970.92px;font-size:11.2px;color:#595959;transform:scaleX(1.0700);transform-origin:0 0">-2,285</div>
<div class="t" style="left:406.27px;top:970.92px;font-size:11.2px;color:#595959;transform:scaleX(1.0700);transform-origin:0 0">-2,285</div>
<div class="t" style="left:540.18px;top:970.92px;font-size:11.2px;color:#595959;transform:scaleX(1.0700);transform-origin:0 0">-2,285</div>
<div class="t" style="left:674.09px;top:970.92px;font-size:11.2px;color:#595959;transform:scaleX(1.0700);transform-origin:0 0">-2,285</div>
<div class="t" style="left:808.00px;top:970.92px;font-size:11.2px;color:#595959;transform:scaleX(1.0700);transform-origin:0 0">-2,285</div>
<div class="t" style="left:941.91px;top:970.92px;font-size:11.2px;color:#595959;transform:scaleX(1.0700);transform-origin:0 0">-2,285</div>
<div class="t" style="left:1075.81px;top:970.92px;font-size:11.2px;color:#595959;transform:scaleX(1.0700);transform-origin:0 0">-2,285</div>
<div class="t" style="left:1209.72px;top:970.92px;font-size:11.2px;color:#595959;transform:scaleX(1.0700);transform-origin:0 0">-2,285</div>
<div class="t" style="left:1343.63px;top:970.92px;font-size:11.2px;color:#595959;transform:scaleX(1.0700);transform-origin:0 0">-2,285</div>
<div class="t" style="left:1477.54px;top:970.92px;font-size:11.2px;color:#595959;transform:scaleX(1.0700);transform-origin:0 0">-2,285</div>
<div class="t" style="left:1611.45px;top:970.92px;font-size:11.2px;color:#595959;transform:scaleX(1.0700);transform-origin:0 0">-2,285</div>
<div class="t" style="left:1745.36px;top:970.92px;font-size:11.2px;color:#595959;transform:scaleX(1.0700);transform-origin:0 0">-2,285</div>
<div class="a" style="left:43px;top:994.8px;width:8px;height:7.5px;background:#ED7D31"></div>
<div class="t" style="left:53.90px;top:992.92px;font-size:11.2px;color:#595959;transform:scaleX(1.0125);transform-origin:0 0">Total COGS</div>
<div class="t" style="left:269.03px;top:992.92px;font-size:11.2px;color:#595959;transform:scaleX(1.0700);transform-origin:0 0">-10,390</div>
<div class="t" style="left:402.94px;top:992.92px;font-size:11.2px;color:#595959;transform:scaleX(1.0700);transform-origin:0 0">-10,390</div>
<div class="t" style="left:536.85px;top:992.92px;font-size:11.2px;color:#595959;transform:scaleX(1.0700);transform-origin:0 0">-10,390</div>
<div class="t" style="left:670.76px;top:992.92px;font-size:11.2px;color:#595959;transform:scaleX(1.0700);transform-origin:0 0">-10,390</div>
<div class="t" style="left:804.66px;top:992.92px;font-size:11.2px;color:#595959;transform:scaleX(1.0700);transform-origin:0 0">-10,390</div>
<div class="t" style="left:938.57px;top:992.92px;font-size:11.2px;color:#595959;transform:scaleX(1.0700);transform-origin:0 0">-10,390</div>
<div class="t" style="left:1072.48px;top:992.92px;font-size:11.2px;color:#595959;transform:scaleX(1.0700);transform-origin:0 0">-10,390</div>
<div class="t" style="left:1206.39px;top:992.92px;font-size:11.2px;color:#595959;transform:scaleX(1.0700);transform-origin:0 0">-10,390</div>
<div class="t" style="left:1340.30px;top:992.92px;font-size:11.2px;color:#595959;transform:scaleX(1.0700);transform-origin:0 0">-10,390</div>
<div class="t" style="left:1474.21px;top:992.92px;font-size:11.2px;color:#595959;transform:scaleX(1.0700);transform-origin:0 0">-10,390</div>
<div class="t" style="left:1608.11px;top:992.92px;font-size:11.2px;color:#595959;transform:scaleX(1.0700);transform-origin:0 0">-10,390</div>
<div class="t" style="left:1742.02px;top:992.92px;font-size:11.2px;color:#595959;transform:scaleX(1.0700);transform-origin:0 0">-10,390</div>
<div class="a" style="left:43px;top:1016.8px;width:8px;height:7.5px;background:#4472C4"></div>
<div class="t" style="left:53.90px;top:1014.92px;font-size:11.2px;color:#595959;transform:scaleX(1.0726);transform-origin:0 0">Total Revenue</div>
<div class="t" style="left:286.02px;top:1014.92px;font-size:11.2px;color:#595959;transform:scaleX(1.0700);transform-origin:0 0">0</div>
<div class="t" style="left:419.93px;top:1014.92px;font-size:11.2px;color:#595959;transform:scaleX(1.0700);transform-origin:0 0">0</div>
<div class="t" style="left:553.84px;top:1014.92px;font-size:11.2px;color:#595959;transform:scaleX(1.0700);transform-origin:0 0">0</div>
<div class="t" style="left:687.75px;top:1014.92px;font-size:11.2px;color:#595959;transform:scaleX(1.0700);transform-origin:0 0">0</div>
<div class="t" style="left:821.65px;top:1014.92px;font-size:11.2px;color:#595959;transform:scaleX(1.0700);transform-origin:0 0">0</div>
<div class="t" style="left:955.56px;top:1014.92px;font-size:11.2px;color:#595959;transform:scaleX(1.0700);transform-origin:0 0">0</div>
<div class="t" style="left:1089.47px;top:1014.92px;font-size:11.2px;color:#595959;transform:scaleX(1.0700);transform-origin:0 0">0</div>
<div class="t" style="left:1223.38px;top:1014.92px;font-size:11.2px;color:#595959;transform:scaleX(1.0700);transform-origin:0 0">0</div>
<div class="t" style="left:1357.29px;top:1014.92px;font-size:11.2px;color:#595959;transform:scaleX(1.0700);transform-origin:0 0">0</div>
<div class="t" style="left:1491.20px;top:1014.92px;font-size:11.2px;color:#595959;transform:scaleX(1.0700);transform-origin:0 0">0</div>
<div class="t" style="left:1625.10px;top:1014.92px;font-size:11.2px;color:#595959;transform:scaleX(1.0700);transform-origin:0 0">0</div>
<div class="t" style="left:1759.01px;top:1014.92px;font-size:11.2px;color:#595959;transform:scaleX(1.0700);transform-origin:0 0">0</div>
</div>
<div class="a" style="left:1894px;top:98px;width:25px;height:975px;background:#E4E7EB"></div>
<div class="a" style="left:1894px;top:98px;width:25px;height:4px;background:linear-gradient(#D2D5D9,#E4E7EB)"></div>
<div class="a" style="left:1897px;top:99px;width:20.5px;height:974px;background:#F3F3F3;border-radius:7px"></div>
<svg class="a" style="left:1901px;top:103px" width="13" height="11"><path d="M6.5 1.5 L11.5 9 Q11.8 9.8 11 9.8 H2 Q1.2 9.8 1.5 9 Z" fill="#6E6E6E" stroke="#6E6E6E" stroke-width="0.8" stroke-linejoin="round"/></svg>
<div class="a" style="left:1902px;top:119px;width:11px;height:325px;background:#6E6E6E;border-radius:6px"></div>
<svg class="a" style="left:1901px;top:1060px" width="13" height="11"><path d="M6.5 9.5 L11.5 2 Q11.8 1.2 11 1.2 H2 Q1.2 1.2 1.5 2 Z" fill="#6E6E6E" stroke="#6E6E6E" stroke-width="0.8" stroke-linejoin="round"/></svg>
<div class="a" style="left:0;top:1073px;width:1919px;height:40px;background:#E4E7EB"></div>
<div class="a" style="left:0;top:1113px;width:1919px;height:1px;background:#CDCFD3"></div>
<svg class="a" style="left:28px;top:1083px" width="16" height="18"><path d="M11 2.5 L5 9 L11 15.5" fill="none" stroke="#424242" stroke-width="1.3"/></svg>
<svg class="a" style="left:69px;top:1083px" width="16" height="18"><path d="M5 2.5 L11 9 L5 15.5" fill="none" stroke="#424242" stroke-width="1.3"/></svg>
<div class="a" style="left:108px;top:1090px;width:4px;height:4px;border-radius:50%;background:#333"></div>
<div class="a" style="left:113px;top:1090px;width:4px;height:4px;border-radius:50%;background:#333"></div>
<div class="a" style="left:118px;top:1090px;width:4px;height:4px;border-radius:50%;background:#333"></div>
<div class="t" style="left:152.40px;top:1085.06px;font-size:18px;color:#242424;transform:scaleX(0.8848);transform-origin:0 0">BS 2028</div>
<div class="t" style="left:249.30px;top:1085.06px;font-size:18px;color:#242424;transform:scaleX(0.9431);transform-origin:0 0">Statements Summary 2028</div>
<div class="t" style="left:491.00px;top:1085.06px;font-size:18px;color:#242424;transform:scaleX(0.8976);transform-origin:0 0">IS 2029</div>
<div class="t" style="left:579.00px;top:1085.06px;font-size:18px;color:#242424;transform:scaleX(0.8937);transform-origin:0 0">CF 2029</div>
<div class="t" style="left:674.40px;top:1085.06px;font-size:18px;color:#242424;transform:scaleX(0.8877);transform-origin:0 0">BS 2029</div>
<div class="t" style="left:771.00px;top:1085.06px;font-size:18px;color:#242424;transform:scaleX(0.9463);transform-origin:0 0">Statements Summary 2029</div>
<div class="t" style="left:1014.00px;top:1085.06px;font-size:18px;color:#242424;transform:scaleX(0.9186);transform-origin:0 0">Sales Summary Charts</div>
<div class="t" style="left:1398.30px;top:1085.06px;font-size:18px;color:#242424;transform:scaleX(0.9110);transform-origin:0 0">Charts</div>
<div class="t" style="left:1479.70px;top:1085.06px;font-size:18px;color:#242424;transform:scaleX(0.8190);transform-origin:0 0">BEA</div>
<div class="t" style="left:1543.50px;top:1085.06px;font-size:18px;color:#242424;transform:scaleX(0.9189);transform-origin:0 0">Top Expenses</div>
<div class="a" style="left:230px;top:1081px;width:1px;height:24px;background:#C8CACE"></div>
<div class="a" style="left:474px;top:1081px;width:1px;height:24px;background:#C8CACE"></div>
<div class="a" style="left:563.4px;top:1081px;width:1px;height:24px;background:#C8CACE"></div>
<div class="a" style="left:657.4px;top:1081px;width:1px;height:24px;background:#C8CACE"></div>
<div class="a" style="left:752.4px;top:1081px;width:1px;height:24px;background:#C8CACE"></div>
<div class="a" style="left:996px;top:1081px;width:1px;height:24px;background:#C8CACE"></div>
<div class="a" style="left:1202px;top:1081px;width:1px;height:24px;background:#C8CACE"></div>
<div class="a" style="left:1381px;top:1081px;width:1px;height:24px;background:#C8CACE"></div>
<div class="a" style="left:1463.4px;top:1081px;width:1px;height:24px;background:#C8CACE"></div>
<div class="a" style="left:1525.5px;top:1081px;width:1px;height:24px;background:#C8CACE"></div>
<div class="a" style="left:1664.3px;top:1081px;width:1px;height:24px;background:#C8CACE"></div>
<div class="a" style="left:1208px;top:1073px;width:168px;height:35px;background:#fff;border-radius:0 0 7px 7px"></div>
<div class="a" style="left:1201px;top:1073px;width:7px;height:7px;background:#fff"></div><div class="a" style="left:1201px;top:1073px;width:7px;height:7px;background:#E4E7EB;border-top-right-radius:7px"></div>
<div class="a" style="left:1376px;top:1073px;width:7px;height:7px;background:#fff"></div><div class="a" style="left:1376px;top:1073px;width:7px;height:7px;background:#E4E7EB;border-top-left-radius:7px"></div>
<div class="t" style="left:1218.50px;top:1081.39px;font-size:17.5px;color:#242424;font-weight:700;transform:scaleX(0.9272);transform-origin:0 0">Key Metrics Charts</div>
<div class="a" style="left:1218px;top:1103px;width:148px;height:2px;background:#107C41"></div>
<div class="a" style="left:1680px;top:1080px;width:9px;height:26px;overflow:hidden">
<div class="t" style="left:2.80px;top:4.99px;font-size:17.5px;color:#242424">S</div>
</div>
<div class="a" style="left:1701px;top:1089px;width:4px;height:4px;border-radius:50%;background:#333"></div>
<div class="a" style="left:1706.5px;top:1089px;width:4px;height:4px;border-radius:50%;background:#333"></div>
<div class="a" style="left:1712px;top:1089px;width:4px;height:4px;border-radius:50%;background:#333"></div>
<div class="a" style="left:1741px;top:1091px;width:15px;height:1.5px;background:#333"></div><div class="a" style="left:1747.7px;top:1084px;width:1.5px;height:15px;background:#333"></div>
<div class="a" style="left:1787px;top:1084px;width:3.5px;height:3.5px;border-radius:50%;background:#333"></div>
<div class="a" style="left:1787px;top:1091px;width:3.5px;height:3.5px;border-radius:50%;background:#333"></div>
<div class="a" style="left:1787px;top:1098px;width:3.5px;height:3.5px;border-radius:50%;background:#333"></div>
<div class="a" style="left:1809px;top:1082.5px;width:87px;height:20.5px;background:#EFF0F2;border-radius:10px"></div>
<svg class="a" style="left:1814px;top:1086px" width="11" height="13"><path d="M9.5 1.5 L1.5 6.5 L9.5 11.5 Z" fill="#555"/></svg>
<div class="a" style="left:1829.4px;top:1087.4px;width:39.4px;height:10.4px;background:#6E6E6E;border-radius:5px"></div>
<svg class="a" style="left:1880px;top:1086px" width="11" height="13"><path d="M1.5 1.5 L9.5 6.5 L1.5 11.5 Z" fill="#555"/></svg>
<div class="a" style="left:0;top:1114px;width:1919px;height:22px;background:#F3F3F3"></div>
<div class="t" style="left:14.00px;top:1120.80px;font-size:13px;color:#333;transform:scaleX(0.9580);transform-origin:0 0">Ready</div>
<svg class="a" style="left:74px;top:1118px" width="20" height="18" viewBox="0 0 20 18"><g fill="none" stroke="#2B2B2B" stroke-width="1.3"><path d="M1.8 17.5 V1.8 H18.2 V6"/><path d="M1.8 3 H18.2" stroke-width="2"/><path d="M3 6.3 H6.5 M3 9.8 H4.5 M3 12.6 H4.5"/><path d="M1.8 17 H7"/><circle cx="13" cy="12.3" r="5"/></g><circle cx="13" cy="12.3" r="2.1" fill="#2B2B2B"/></svg>
<svg class="a" style="left:114px;top:1117px" width="20" height="19" viewBox="0 0 20 19"><g fill="none" stroke="#2B2B2B" stroke-width="1.2" stroke-linecap="round"><circle cx="8.6" cy="4" r="2"/><path d="M6.4 5.6 C5 4.5 3.5 3.2 2.2 4.2 C1 5.3 3 6.3 5.8 7.2 L6.3 10 C6 13 5.5 15.5 5.3 17.5"/><path d="M10.8 5.6 C12 4.5 13.5 3.5 14.8 4.5 C15.8 5.6 14.5 6.5 12.3 7.5"/><path d="M6.3 10 C7 9 7.8 9.5 7.8 11 L7.6 14.5"/><path d="M10.5 11 L17.5 18.5 M17.5 11 L10.5 18.5"/></g></svg>
<div class="t" style="left:137.00px;top:1120.80px;font-size:13px;color:#242424;font-weight:700;transform:scaleX(0.9785);transform-origin:0 0">Accessibility: Investigate</div>
<div class="a" style="left:1548px;top:1114px;width:50px;height:22px;background:#E0E0E0"></div>
<svg class="a" style="left:1563px;top:1118px" width="19" height="18" viewBox="0 0 19 18"><g fill="none" stroke="#444" stroke-width="1.3"><rect x="1.5" y="1" width="16" height="16"/><path d="M7 1 V17 M12 1 V17 M1.5 6.3 H17.5 M1.5 11.6 H17.5"/></g></svg>
<svg class="a" style="left:1613px;top:1118px" width="19" height="18" viewBox="0 0 19 18"><g fill="none" stroke="#444" stroke-width="1.3"><rect x="1.5" y="1" width="16" height="16"/><rect x="5" y="4" width="9" height="10"/><path d="M7 7 H12 M7 9.5 H12 M7 12 H12"/></g></svg>
<svg class="a" style="left:1663px;top:1118px" width="19" height="18" viewBox="0 0 19 18"><g fill="none" stroke="#444" stroke-width="1.3"><rect x="1.5" y="1" width="16" height="16"/><path d="M6 1 V8 H17.5 M11.5 1 V8"/></g></svg>
<div class="a" style="left:1704.6px;top:1125.6px;width:10px;height:1.3px;background:#444"></div>
<div class="a" style="left:1721px;top:1126.5px;width:125px;height:1px;background:#888"></div>
<div class="a" style="left:1781.3px;top:1120px;width:5.4px;height:13.5px;background:#555"></div>
<div class="a" style="left:1851.6px;top:1126px;width:10px;height:1.3px;background:#444"></div><div class="a" style="left:1855.9px;top:1121.5px;width:1.3px;height:10px;background:#444"></div>
<div class="t" style="left:1878.60px;top:1121.22px;font-size:12.5px;color:#333;transform:scaleX(0.9446);transform-origin:0 0">100%</div>
</body></html>
